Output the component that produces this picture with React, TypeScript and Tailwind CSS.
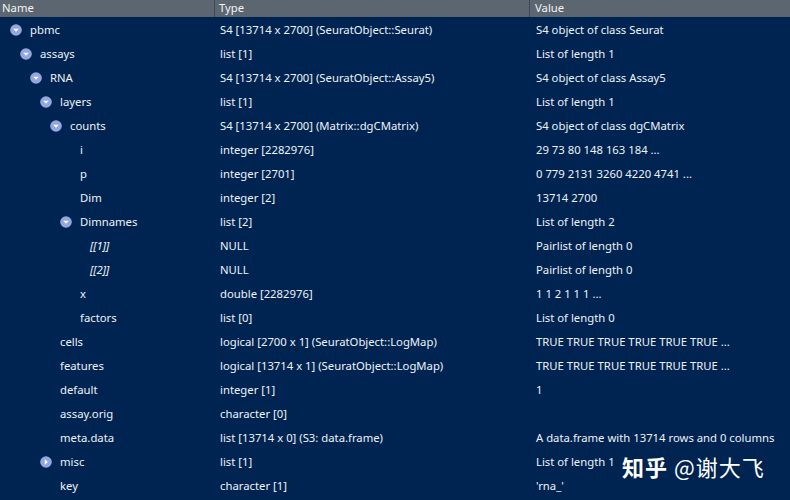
import React from 'react';

type Row = {
  name: string;
  depth: number;
  type: string;
  value: string;
  icon?: 'open' | 'closed';
  italic?: boolean;
};

const rows: Row[] = [
  { name: 'pbmc', depth: 0, icon: 'open', type: 'S4 [13714 x 2700] (SeuratObject::Seurat)', value: 'S4 object of class Seurat' },
  { name: 'assays', depth: 1, icon: 'open', type: 'list [1]', value: 'List of length 1' },
  { name: 'RNA', depth: 2, icon: 'open', type: 'S4 [13714 x 2700] (SeuratObject::Assay5)', value: 'S4 object of class Assay5' },
  { name: 'layers', depth: 3, icon: 'open', type: 'list [1]', value: 'List of length 1' },
  { name: 'counts', depth: 4, icon: 'open', type: 'S4 [13714 x 2700] (Matrix::dgCMatrix)', value: 'S4 object of class dgCMatrix' },
  { name: 'i', depth: 5, type: 'integer [2282976]', value: '29 73 80 148 163 184 ...' },
  { name: 'p', depth: 5, type: 'integer [2701]', value: '0 779 2131 3260 4220 4741 ...' },
  { name: 'Dim', depth: 5, type: 'integer [2]', value: '13714 2700' },
  { name: 'Dimnames', depth: 5, icon: 'open', type: 'list [2]', value: 'List of length 2' },
  { name: '[[1]]', depth: 6, italic: true, type: 'NULL', value: 'Pairlist of length 0' },
  { name: '[[2]]', depth: 6, italic: true, type: 'NULL', value: 'Pairlist of length 0' },
  { name: 'x', depth: 5, type: 'double [2282976]', value: '1 1 2 1 1 1 ...' },
  { name: 'factors', depth: 5, type: 'list [0]', value: 'List of length 0' },
  { name: 'cells', depth: 3, type: 'logical [2700 x 1] (SeuratObject::LogMap)', value: 'TRUE TRUE TRUE TRUE TRUE TRUE ...' },
  { name: 'features', depth: 3, type: 'logical [13714 x 1] (SeuratObject::LogMap)', value: 'TRUE TRUE TRUE TRUE TRUE TRUE ...' },
  { name: 'default', depth: 3, type: 'integer [1]', value: '1' },
  { name: 'assay.orig', depth: 3, type: 'character [0]', value: '' },
  { name: 'meta.data', depth: 3, type: 'list [13714 x 0] (S3: data.frame)', value: 'A data.frame with 13714 rows and 0 columns' },
  { name: 'misc', depth: 3, icon: 'closed', type: 'list [1]', value: 'List of length 1' },
  { name: 'key', depth: 3, type: 'character [1]', value: "'rna_'" },
];

const Toggle: React.FC<{ open: boolean }> = ({ open }) => (
  <svg width="12" height="12" viewBox="0 0 12 12" className="shrink-0">
    <circle cx="6" cy="6" r="5.8" fill="#93a8e2" />
    {open ? (
      <path d="M3.3 4.7 L8.7 4.7 L6 7.7 Z" fill="#ffffff" />
    ) : (
      <path d="M4.8 3.3 L7.8 6 L4.8 8.7 Z" fill="#ffffff" />
    )}
  </svg>
);

const App: React.FC = () => {
  return (
    <div
      className="relative w-[790px] h-[500px] overflow-hidden bg-[#002451] text-[11.3px] text-[#eef2f8]"
      style={{ fontFamily: '"Noto Sans", "Open Sans", sans-serif' }}
    >
      {/* header */}
      <div className="flex h-[17px] bg-[#5b6670] text-[#f2f4f6] leading-[16px] mb-[1px]">
        <div className="w-[215px] pl-[2px] border-r border-[#3e4852]">Name</div>
        <div className="w-[315px] pl-[4px] border-r border-[#3e4852]">Type</div>
        <div className="flex-1 pl-[5px]">Value</div>
      </div>

      {/* rows */}
      {rows.map((r, idx) => {
        const textX = 30 + r.depth * 10;
        return (
          <div key={idx} className="flex h-[24px] items-center">
            <div className="w-[216px] relative h-full flex items-center">
              {r.icon && (
                <div className="absolute top-[6px]" style={{ left: textX - 20 }}>
                  <Toggle open={r.icon === 'open'} />
                </div>
              )}
              <span className={r.italic ? 'italic' : ''} style={{ paddingLeft: textX }}>
                {r.name}
              </span>
            </div>
            <div className="w-[314px] pl-[4px] whitespace-nowrap">{r.type}</div>
            <div className="flex-1 pl-[6px] whitespace-nowrap">{r.value}</div>
          </div>
        );
      })}

      {/* watermark */}
      <div
        className="absolute left-[622px] top-[450px] text-[22px] text-white tracking-[1px]"
        style={{ fontFamily: '"Noto Sans CJK SC", "Noto Sans", sans-serif' }}
      >
        <span className="font-bold">知乎</span> @谢大飞
      </div>
    </div>
  );
};

export default App;
